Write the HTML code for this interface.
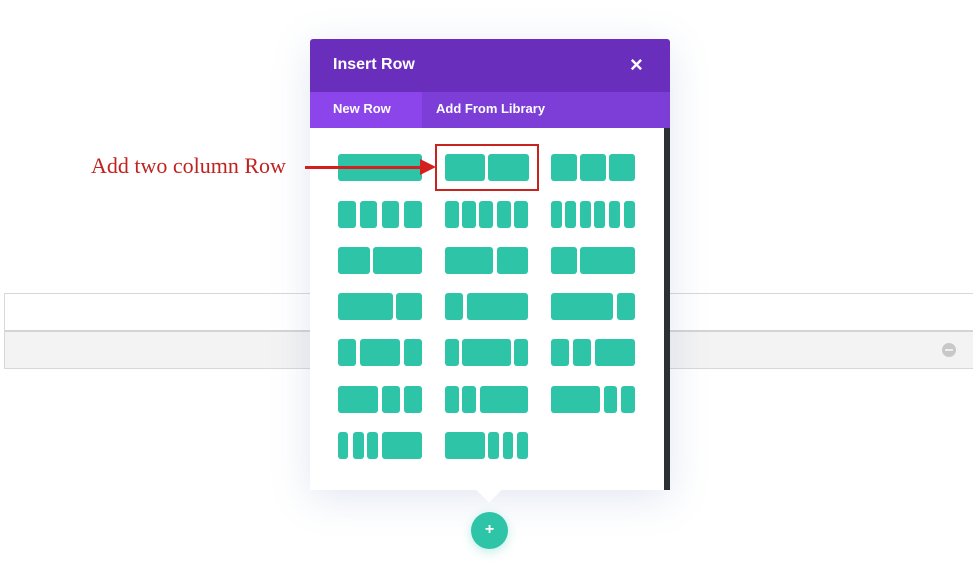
<!DOCTYPE html>
<html><head><meta charset="utf-8"><style>
*{margin:0;padding:0;box-sizing:border-box}
body{width:973px;height:570px;background:#fff;position:relative;overflow:hidden;font-family:"Liberation Sans",sans-serif}
.a{position:absolute}
.b{position:absolute;background:#2ec4a8;border-radius:3px;height:27px}
</style></head><body>
<div class="a" style="left:4px;top:293px;width:969px;height:38px;border:1px solid #d8d8d8;border-right:none;background:#fff"></div>
<div class="a" style="left:4px;top:330px;width:969px;height:39px;border:1px solid #d8d8d8;border-top:2px solid #d4d4d4;border-right:none;background:#f3f3f3"></div>
<div class="a" style="left:942px;top:343px;width:14px;height:14px;border-radius:50%;background:#c8c8c8"></div>
<div class="a" style="left:945px;top:349px;width:8px;height:2px;background:#eee"></div>

<div class="a" style="left:310px;top:39px;width:360px;height:451px;box-shadow:0 8px 40px rgba(90,120,180,.18);background:#fff;border-radius:3px 3px 0 0"></div>
<div class="a" style="left:310px;top:39px;width:360px;height:53px;background:#6a2ebc;border-radius:3px 3px 0 0"></div>
<div class="a" style="left:333px;top:56px;color:#fff;font-weight:bold;font-size:16px">Insert Row</div>
<div class="a" style="left:630px;top:52px;color:#fff;font-weight:bold;font-size:22px">×</div>
<div class="a" style="left:310px;top:92px;width:360px;height:36px;background:#7c3ed6"></div>
<div class="a" style="left:310px;top:92px;width:112px;height:36px;background:#8c45ea"></div>
<div class="a" style="left:333px;top:101px;color:#fff;font-weight:bold;font-size:13px">New Row</div>
<div class="a" style="left:436px;top:101px;color:#fff;font-weight:bold;font-size:13px">Add From Library</div>
<div class="a" style="left:664px;top:128px;width:6px;height:362px;background:#2b3035"></div>
<div class="a" style="left:480px;top:481px;width:18px;height:18px;background:#fff;transform:rotate(45deg)"></div>

<div class="a" style="left:471px;top:512px;width:37px;height:37px;border-radius:50%;background:#2ec4a8;color:#fff;font-weight:bold;font-size:16px;text-align:center;line-height:36px;box-shadow:0 3px 10px rgba(46,196,168,.3)">+</div>

<div id="g"></div>
<script>
var rows=[154,201,247,293,339,386,432],gx=[338,445,551];
var L=[
[[[0,84]],[[0,40],[43,41]],[[0,26],[29,26],[58,26]]],
[[[0,18],[22,17],[44,17],[66,18]],[[0,14],[17,14],[34,14],[52,14],[69,14]],[[0,11],[14,11],[29,11],[43,11],[58,11],[73,11]]],
[[[0,32],[35,49]],[[0,48],[52,31]],[[0,26],[29,55]]],
[[[0,55],[58,26]],[[0,18],[22,61]],[[0,62],[66,18]]],
[[[0,18],[22,40],[66,18]],[[0,14],[17,49],[69,14]],[[0,18],[22,18],[44,40]]],
[[[0,40],[44,18],[66,18]],[[0,14],[17,14],[35,48]],[[0,49],[53,13],[70,14]]],
[[[0,10],[15,11],[29,11],[44,40]],[[0,40],[43,11],[58,10],[72,11]]]
];
var h='';L.forEach(function(r,i){r.forEach(function(g,j){g.forEach(function(b){h+='<div class="b" style="left:'+(gx[j]+b[0])+'px;top:'+rows[i]+'px;width:'+b[1]+'px"></div>'})})});
document.getElementById('g').innerHTML=h;
</script>

<div class="a" style="left:435px;top:144px;width:104px;height:47px;border:2px solid #c8231f"></div>
<div class="a" style="left:305px;top:166px;width:118px;height:3px;background:#d41f1f"></div>
<div class="a" style="left:420px;top:159px;width:0;height:0;border-top:8px solid transparent;border-bottom:8px solid transparent;border-left:16px solid #d41f1f"></div>
<div class="a" style="left:91px;top:153px;color:#c0221f;font-family:'Liberation Serif',serif;font-size:22px;white-space:nowrap">Add two column Row</div>
</body></html>
